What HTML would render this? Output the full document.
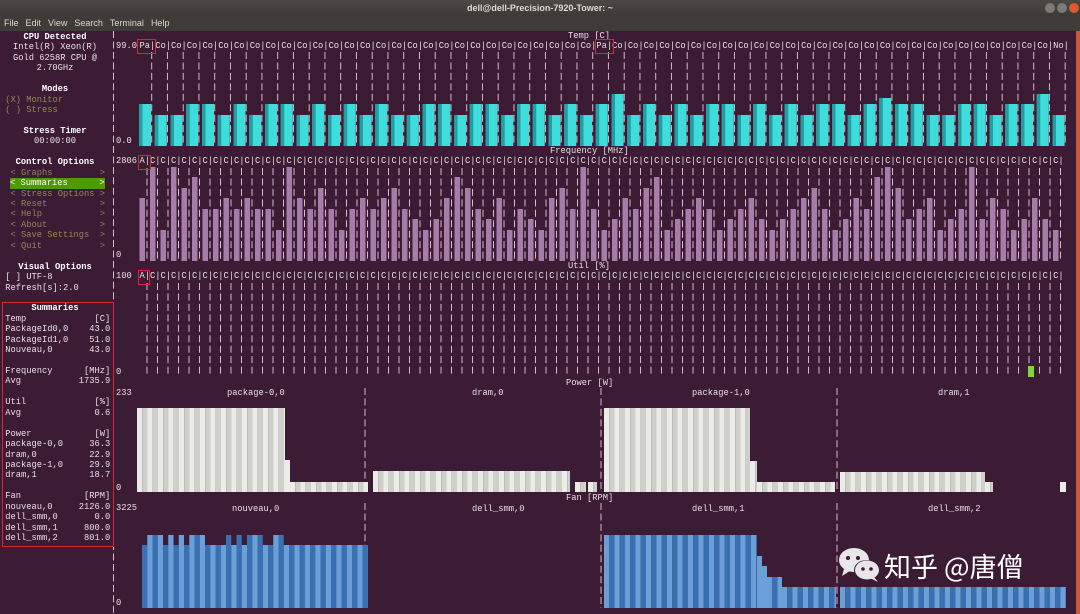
<!DOCTYPE html>
<html><head><meta charset="utf-8">
<style>
*{margin:0;padding:0}
body{width:1080px;height:614px;overflow:hidden;background:#3c1b35;position:relative;font-family:"Liberation Mono",monospace;}
#title{position:absolute;left:0;top:0;width:1080px;height:16px;background:linear-gradient(#4a4945,#3c3b37);color:#dfdbd2;font:bold 9px "Liberation Sans",sans-serif;text-align:center;line-height:16px}
#menu{position:absolute;left:0;top:16px;width:1080px;height:15px;background:#3d3c38;color:#dcd8cf;font:9px "Liberation Sans",sans-serif;line-height:15px}
#menu span{margin-left:4px;margin-right:3px}
.btn{position:absolute;top:3px;width:10px;height:10px;border-radius:50%;background:#7d7b75}
.t{position:absolute;white-space:pre;font-size:8.75px;line-height:10.45px;color:#e6e0e4}
.b{font-weight:bold;color:#fff}
.dim{color:#8d8a54}
#left{left:0;top:32px;width:110px;white-space:normal}
#left div{height:10.45px;white-space:pre;overflow:visible}
.c{text-align:center}
.rb{position:absolute;border:1px solid #d8262c}
svg{position:absolute;left:0;top:0}
#scr{position:absolute;left:1076px;top:31px;width:4px;height:583px;background:#c65a3c}
</style></head><body>
<div id="title">dell@dell-Precision-7920-Tower: ~</div>
<div class="btn" style="left:1045px"></div><div class="btn" style="left:1057px"></div><div class="btn" style="left:1069px;background:#e0582b"></div>
<div id="menu"><span>File</span><span>Edit</span><span>View</span><span>Search</span><span>Terminal</span><span>Help</span></div>
<div id="scr"></div>
<svg id="g" width="1080" height="614"></svg>
<div id="left" class="t"><div class="c b">CPU Detected</div><div class="c">Intel(R) Xeon(R)</div><div class="c">Gold 6258R CPU @</div><div class="c">2.70GHz</div><div></div><div class="c b">Modes</div><div class="dim"> (X) Monitor</div><div class="dim"> ( ) Stress</div><div></div><div class="c b">Stress Timer</div><div class="c">00:00:00</div><div></div><div class="c b">Control Options</div><div class="dim">  &lt; Graphs         &gt;</div><div style="padding-left:10px"><span style="display:inline-block;width:95px;background:#4e9a06;color:#fff">&lt; Summaries      &gt;</span></div><div class="dim">  &lt; Stress Options &gt;</div><div class="dim">  &lt; Reset          &gt;</div><div class="dim">  &lt; Help           &gt;</div><div class="dim">  &lt; About          &gt;</div><div class="dim">  &lt; Save Settings  &gt;</div><div class="dim">  &lt; Quit           &gt;</div><div></div><div class="c b">Visual Options</div><div> [ ] UTF-8</div><div> Refresh[s]:2.0</div><div></div><div class="c b">Summaries</div><div> Temp             [C]</div><div> PackageId0,0    43.0</div><div> PackageId1,0    51.0</div><div> Nouveau,0       43.0</div><div></div><div> Frequency      [MHz]</div><div> Avg           1735.9</div><div></div><div> Util             [%]</div><div> Avg              0.6</div><div></div><div> Power            [W]</div><div> package-0,0     36.3</div><div> dram,0          22.9</div><div> package-1,0     29.9</div><div> dram,1          18.7</div><div></div><div> Fan            [RPM]</div><div> nouveau,0     2126.0</div><div> dell_smm,0       0.0</div><div> dell_smm,1     800.0</div><div> dell_smm,2     801.0</div></div>
<div class="rb" style="left:2px;top:302px;width:110px;height:243px"></div>
<div id="txt"></div>
<div class="rb" style="left:137px;top:39px;width:17px;height:13px"></div>
<div class="rb" style="left:595px;top:39px;width:17px;height:13px"></div>
<div class="rb" style="left:138px;top:155px;width:11px;height:13px"></div>
<div class="rb" style="left:138px;top:270px;width:10px;height:13px"></div>
<svg width="50" height="40" style="left:836px;top:545px">
<ellipse cx="18" cy="15" rx="15" ry="12" fill="#e8e6e8"/><path d="M8 24 L6 31 L14 26Z" fill="#e8e6e8"/>
<circle cx="12" cy="13" r="2" fill="#3c1b35"/><circle cx="22" cy="13" r="2" fill="#3c1b35"/>
<ellipse cx="31" cy="25" rx="13" ry="10" fill="#3c1b35"/>
<ellipse cx="31" cy="25" rx="12" ry="9.5" fill="#e8e6e8"/><path d="M38 32 L42 37 L34 33Z" fill="#e8e6e8"/>
<circle cx="27" cy="24" r="1.8" fill="#3c1b35"/><circle cx="35" cy="24" r="1.8" fill="#3c1b35"/>
</svg>
<div style="position:absolute;left:884px;top:548px;font:27px 'Noto Sans CJK SC',sans-serif;color:#fff;white-space:pre;line-height:36px">知乎 @唐僧</div>
<script>
var NS="http://www.w3.org/2000/svg",g=document.getElementById('g'),txt=document.getElementById('txt');
function R(x,y,w,h,c){var r=document.createElementNS(NS,'rect');r.setAttribute('x',x);r.setAttribute('y',y);r.setAttribute('width',w);r.setAttribute('height',h);r.setAttribute('fill',c);g.appendChild(r);}
function V(x,y1,y2){var l=document.createElementNS(NS,'line');l.setAttribute('x1',x);l.setAttribute('x2',x);l.setAttribute('y1',y1);l.setAttribute('y2',y2);l.setAttribute('stroke','#d9b9cc');l.setAttribute('stroke-width','1');l.setAttribute('stroke-dasharray','7 3.45');g.appendChild(l);}
function T(x,y,s,c){var d=document.createElement('div');d.className='t';d.style.left=x+'px';d.style.top=(y-5)+'px';d.textContent=s;if(c)d.style.color=c;txt.appendChild(d);}
var LH=10.45;function row(n){return 36+LH*n;}
V(113.5,31,614);
T(568,row(0),'Temp [C]');T(116,row(1),'99.0');T(116,row(10),'0.0');
var s='';for(var i=0;i<59;i++)s+=(i==0||i==29?'Pa':(i==58?'No':'Co'))+'|';T(139.5,row(1),s);
var th=[104,115,115,104,104,115,104,115,104,104,115,104,115,104,115,104,115,115,104,104,115,104,104,115,104,104,115,104,115,104,94,115,104,115,104,115,104,104,115,104,115,104,115,104,104,115,104,98,104,104,115,115,104,104,115,104,104,94,115];
for(var i=0;i<59;i++){var x=139+i*15.75,t=th[i];V(x+12.7,52,146);R(x,t,12,146-t,'#3fdcdc');R(x,t,3.5,146-t,'#1f9fa3');}
T(550,row(11),'Frequency [MHz]');T(116,row(12),'2806');T(116,row(21),'0');
s='';for(var i=0;i<88;i++)s+=(i==0?'A':'C')+'|';T(139.5,row(12),s);
var fh=[198,167,230,167,188,177,209,209,198,209,198,209,209,230,167,198,209,188,209,230,209,198,209,198,188,209,219,230,219,198,177,188,209,219,198,230,209,219,230,198,188,209,167,209,230,219,198,209,188,177,230,219,209,198,209,230,219,209,198,219,230,219,209,198,188,209,230,219,198,209,177,167,188,219,209,198,230,219,209,167,219,198,209,230,219,198,219,230];
for(var i=0;i<88;i++){var x=139+i*10.5;V(x+8,168,261);R(x+0.5,fh[i],5.5,261-fh[i],'#a67da8');}
T(568,row(22),'Util [%]');T(116,row(23),'100');T(116,372,'0');
s='';for(var i=0;i<88;i++)s+=(i==0?'A':'C')+'|';T(139.5,row(23),s);
for(var i=0;i<88;i++){var x=139+i*10.5;V(x+8,283,377);}
R(1028,366,6,11,'#7fd83a');
T(566,383,'Power [W]');T(116,393,'233');T(116,488,'0');
T(227,393,'package-0,0');T(472,393,'dram,0');T(692,393,'package-1,0');T(938,393,'dram,1');
[365,601,837].forEach(function(x){V(x,388,492);V(x,503,608);});
function stripes(x1,x2,top,bot,c1,c2){for(var x=x1,k=0;x<x2;x+=5.25,k++)R(x,top,Math.min(5.25,x2-x),bot-top,k%2?c2:c1);}
var W1='#ebebe7',W2='#cfd0cb';
stripes(137,285,408,492,W1,W2);stripes(285,290,460,492,W1,W2);stripes(290,368,482,492,W1,W2);
stripes(373,570,471,492,W1,W2);stripes(575,586,482,492,W1,W2);stripes(588,597,482,492,W1,W2);
stripes(604,750,408,492,W1,W2);stripes(750,757,461,492,W1,W2);stripes(757,835,482,492,W1,W2);
stripes(840,985,472,492,W1,W2);stripes(985,993,482,492,W1,W2);R(1060,482,6,10,W1);
T(566,498,'Fan [RPM]');T(116,508,'3225');T(116,603,'0');
T(232,509,'nouveau,0');T(472,509,'dell_smm,0');T(692,509,'dell_smm,1');T(928,509,'dell_smm,2');
var nt=[545,535,535,535,545,535,545,535,545,535,535,535,545,545,545,545,535,545,535,545,535,535,535,545,545,535,535,545,545,545,545,545,545,545,545,545,545,545,545,545,545,545,545];
for(var x=142,k=0;x<368;x+=5.25,k++){var t=nt[k%nt.length];R(x,t,Math.min(5.25,368-x),608-t,k%2?'#6a9fd8':'#3a6fb1');}
function fs(x1,x2,top){for(var x=x1,k=0;x<x2;x+=5.25,k++)R(x,top,Math.min(5.25,x2-x),608-top,k%2?'#3a6fb1':'#6a9fd8');}
fs(604,757,535);fs(757,762,556);fs(762,767,566);fs(767,782,577);fs(782,836,587);fs(840,1066,587);
</script>
</body></html>
